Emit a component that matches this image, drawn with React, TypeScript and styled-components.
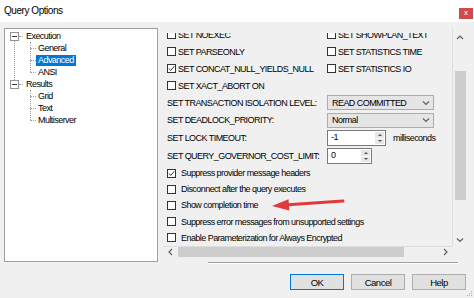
import React from "react";
import styled, { createGlobalStyle } from "styled-components";

const FONT = `"Liberation Sans", Arial, sans-serif`;

const GlobalStyle = createGlobalStyle`
  html, body {
    margin: 0;
    padding: 0;
    background: #f0f0f0;
  }
  body {
    font-family: ${FONT};
  }
`;

const Window = styled.div`
  position: relative;
  width: 474px;
  height: 298px;
  background: #f0f0f0;
  font-family: ${FONT};
  font-size: 9px;
  letter-spacing: -0.55px;
  color: #000;
  overflow: hidden;
  display: flex;
  flex-direction: column;
`;

const TitleBar = styled.div`
  height: 22px;
  flex-shrink: 0;
  background: #fff;
  display: flex;
  align-items: flex-start;
`;

const Title = styled.span`
  font-size: 10px;
  letter-spacing: -0.45px;
  line-height: 22px;
  padding-left: 4px;
`;

const CloseButton = styled.div`
  margin: 8px 1px 0 auto;
  width: 14px;
  height: 11px;
  background: #d24b4b;
  color: #fff;
  font-size: 8px;
  letter-spacing: 0;
  line-height: 10px;
  text-align: center;
`;

const Body = styled.div`
  flex: 1;
  display: flex;
  flex-direction: column;
  padding: 6px 7px 0 4px;
`;

const MainRow = styled.div`
  display: flex;
  gap: 5px;
  height: 235px;
`;

/* ---------- tree ---------- */

const TreePanel = styled.div`
  width: 154px;
  height: 234px;
  box-sizing: border-box;
  background: #fff;
  border: 1px solid #a0a0a0;
  padding-top: 1px;
`;

const TreeGroup = styled.div<{ $hasNext?: boolean }>`
  position: relative;
  ${(p) =>
    p.$hasNext &&
    `
    &::before {
      content: "";
      position: absolute;
      left: 9px;
      top: 11px;
      bottom: -2px;
      border-left: 1px dotted #a0a0a0;
    }
  `}
`;

const RootRow = styled.div`
  height: 12px;
  display: flex;
  align-items: center;
  padding-left: 5px;
`;

const Expander = styled.span`
  position: relative;
  width: 9px;
  height: 9px;
  box-sizing: border-box;
  border: 1px solid #919191;
  background: #fff;
  flex-shrink: 0;
  &::after {
    content: "";
    position: absolute;
    left: 1px;
    top: 3px;
    width: 5px;
    height: 1px;
    background: #333;
  }
`;

const Dash = styled.span<{ $w: number }>`
  width: ${(p) => p.$w}px;
  border-top: 1px dotted #a0a0a0;
  flex-shrink: 0;
`;

const ChildList = styled.div<{ $count: number }>`
  position: relative;
  &::before {
    content: "";
    position: absolute;
    left: 25px;
    top: 0;
    height: ${(p) => p.$count * 12 - 6}px;
    border-left: 1px dotted #a0a0a0;
  }
`;

const ChildRow = styled.div`
  height: 12px;
  display: flex;
  align-items: center;
  padding-left: 25px;
`;

const TreeLabel = styled.span<{ $selected?: boolean; $root?: boolean }>`
  padding: 0 2px;
  margin-left: ${(p) => (p.$root ? 1 : 0)}px;
  line-height: 11px;
  background: ${(p) => (p.$selected ? "#0078d7" : "transparent")};
  color: ${(p) => (p.$selected ? "#fff" : "#000")};
`;

/* ---------- right side ---------- */

const RightCol = styled.div`
  flex: 1;
  display: flex;
  flex-direction: column;
`;

const ScrollFrame = styled.div`
  height: 230px;
  display: grid;
  grid-template-columns: 1fr 15px;
  grid-template-rows: 1fr 12px;
`;

const Viewport = styled.div`
  margin-top: 5px;
  overflow: hidden;
  position: relative;
`;

const Content = styled.div`
  margin-top: -7px;
  padding-left: 4px;
  display: flex;
  flex-direction: column;
`;

const Row = styled.div<{ $h: number }>`
  height: ${(p) => p.$h}px;
  display: flex;
  align-items: center;
  white-space: nowrap;
`;

const Cell = styled.div`
  width: 160px;
  flex-shrink: 0;
  display: flex;
  align-items: center;
`;

const Box = styled.span<{ $gap: number }>`
  width: 9px;
  height: 9px;
  box-sizing: border-box;
  border: 1px solid #333;
  background: #fff;
  margin-right: ${(p) => p.$gap}px;
  flex-shrink: 0;
  display: inline-flex;
  align-items: center;
  justify-content: center;
`;

const Combo = styled.div`
  width: 107px;
  height: 15px;
  box-sizing: border-box;
  border: 1px solid #acacac;
  background: #e5e5e5;
  display: flex;
  align-items: center;
  justify-content: space-between;
  padding: 0 3px 0 4px;
`;

const Spin = styled.div<{ $w: number }>`
  width: ${(p) => p.$w}px;
  height: 16px;
  box-sizing: border-box;
  border: 1px solid #7a7a7a;
  background: #fff;
  display: flex;
`;

const SpinText = styled.span`
  flex: 1;
  padding-left: 3px;
  line-height: 13px;
`;

const SpinButtons = styled.div`
  width: 9px;
  display: flex;
  flex-direction: column;
  gap: 1px;
  padding: 1px 1px 1px 0;
`;

const SpinHalf = styled.div<{ $up?: boolean }>`
  flex: 1;
  background: #e6e6e6;
  display: flex;
  align-items: center;
  justify-content: center;
  &::after {
    content: "";
    border-left: 2px solid transparent;
    border-right: 2px solid transparent;
    ${(p) => (p.$up ? "border-bottom: 2px solid #555;" : "border-top: 2px solid #555;")}
  }
`;

const Unit = styled.span`
  margin-left: 7px;
`;

const VScroll = styled.div`
  grid-row: 1;
  grid-column: 2;
  border-left: 1px solid #dedede;
  background: #f0f0f0;
  display: flex;
  flex-direction: column;
  align-items: center;
`;

const ArrowCell = styled.div<{ $size: number }>`
  flex-shrink: 0;
  width: 100%;
  height: ${(p) => p.$size}px;
  display: flex;
  align-items: center;
  justify-content: center;
`;

const VThumb = styled.div`
  margin-top: 23px;
  width: 11px;
  height: 129px;
  background: #cdcdcd;
`;

const Spacer = styled.div`
  flex: 1;
`;

const HScroll = styled.div`
  border-top: 1px solid #dedede;
  background: #f0f0f0;
  display: flex;
  align-items: center;
`;

const HArrow = styled.div`
  width: 15px;
  height: 100%;
  flex-shrink: 0;
  display: flex;
  align-items: center;
  justify-content: center;
`;

const HThumb = styled.div`
  width: 226px;
  height: 10px;
  background: #cdcdcd;
`;

const Corner = styled.div`
  background: #f0f0f0;
`;

const Separator = styled.div`
  margin: 4px 9px 0 45px;
  border-top: 1px solid #a0a0a0;
  border-bottom: 1px solid #fff;
`;

const ButtonRow = styled.div`
  margin-top: 11px;
  display: flex;
  justify-content: flex-end;
  gap: 7px;
  padding-right: 1px;
`;

const Button = styled.button<{ $default?: boolean }>`
  width: 54px;
  height: 16px;
  padding: 0;
  font-family: ${FONT};
  font-size: 9.5px;
  letter-spacing: -0.5px;
  color: #000;
  background: #e1e1e1;
  border: 1px solid ${(p) => (p.$default ? "#0078d7" : "#adadad")};
`;

const Annotation = styled.svg`
  position: absolute;
  left: 268px;
  top: 194px;
`;

const Grip = styled.svg`
  position: absolute;
  right: 1px;
  bottom: 1px;
`;

type Dir = "up" | "down" | "left" | "right";

const CHEVRONS: Record<Dir, string> = {
  up: "M1 5 L4 2 L7 5",
  down: "M1 2.5 L4 5.5 L7 2.5",
  left: "M5 1 L2 4 L5 7",
  right: "M3 1 L6 4 L3 7",
};

function Chevron({ dir, color = "#606060" }: { dir: Dir; color?: string }) {
  return (
    <svg width="8" height="8" viewBox="0 0 8 8">
      <path d={CHEVRONS[dir]} fill="none" stroke={color} strokeWidth="1.2" />
    </svg>
  );
}

function Check({ label, checked, gap = 2 }: { label: string; checked?: boolean; gap?: number }) {
  return (
    <>
      <Box $gap={gap}>
        {checked && (
          <svg width="7" height="7" viewBox="0 0 7 7">
            <path d="M0.8 3.5 L2.8 5.4 L6.3 1.2" fill="none" stroke="#333" strokeWidth="1" />
          </svg>
        )}
      </Box>
      <span>{label}</span>
    </>
  );
}

const tree = [
  { label: "Execution", children: ["General", "Advanced", "ANSI"] },
  { label: "Results", children: ["Grid", "Text", "Multiserver"] },
];

const bottomChecks = [
  { label: "Suppress provider message headers", checked: true },
  { label: "Disconnect after the query executes" },
  { label: "Show completion time" },
  { label: "Suppress error messages from unsupported settings" },
  { label: "Enable Parameterization for Always Encrypted" },
];

export default function App() {
  return (
    <>
      <GlobalStyle />
      <Window>
        <TitleBar>
          <Title>Query Options</Title>
          <CloseButton>x</CloseButton>
        </TitleBar>
        <Body>
          <MainRow>
            <TreePanel>
              {tree.map((group, gi) => (
                <TreeGroup key={group.label} $hasNext={gi < tree.length - 1}>
                  <RootRow>
                    <Expander />
                    <Dash $w={4} />
                    <TreeLabel $root>{group.label}</TreeLabel>
                  </RootRow>
                  <ChildList $count={group.children.length}>
                    {group.children.map((c) => (
                      <ChildRow key={c}>
                        <Dash $w={6} />
                        <TreeLabel $selected={c === "Advanced"}>{c}</TreeLabel>
                      </ChildRow>
                    ))}
                  </ChildList>
                </TreeGroup>
              ))}
            </TreePanel>

            <RightCol>
              <ScrollFrame>
                <Viewport>
                  <Content>
                    <Row $h={17}>
                      <Cell><Check label="SET NOEXEC" /></Cell>
                      <Check label="SET SHOWPLAN_TEXT" />
                    </Row>
                    <Row $h={17}>
                      <Cell><Check label="SET PARSEONLY" /></Cell>
                      <Check label="SET STATISTICS TIME" />
                    </Row>
                    <Row $h={17}>
                      <Cell><Check label="SET CONCAT_NULL_YIELDS_NULL" checked /></Cell>
                      <Check label="SET STATISTICS IO" />
                    </Row>
                    <Row $h={17}>
                      <Cell><Check label="SET XACT_ABORT ON" /></Cell>
                    </Row>
                    <Row $h={17.5}>
                      <Cell>SET TRANSACTION ISOLATION LEVEL:</Cell>
                      <Combo>
                        <span>READ COMMITTED</span>
                        <Chevron dir="down" />
                      </Combo>
                    </Row>
                    <Row $h={17.5}>
                      <Cell>SET DEADLOCK_PRIORITY:</Cell>
                      <Combo>
                        <span>Normal</span>
                        <Chevron dir="down" />
                      </Combo>
                    </Row>
                    <Row $h={18}>
                      <Cell>SET LOCK TIMEOUT:</Cell>
                      <Spin $w={59}>
                        <SpinText>-1</SpinText>
                        <SpinButtons>
                          <SpinHalf $up />
                          <SpinHalf />
                        </SpinButtons>
                      </Spin>
                      <Unit>milliseconds</Unit>
                    </Row>
                    <Row $h={18}>
                      <Cell>SET QUERY_GOVERNOR_COST_LIMIT:</Cell>
                      <Spin $w={45}>
                        <SpinText>0</SpinText>
                        <SpinButtons>
                          <SpinHalf $up />
                          <SpinHalf />
                        </SpinButtons>
                      </Spin>
                    </Row>
                    {bottomChecks.map((c) => (
                      <Row $h={16.2} key={c.label}>
                        <Check label={c.label} checked={c.checked} gap={5} />
                      </Row>
                    ))}
                  </Content>
                </Viewport>

                <VScroll>
                  <ArrowCell $size={20}>
                    <Chevron dir="up" />
                  </ArrowCell>
                  <VThumb />
                  <Spacer />
                  <ArrowCell $size={12}>
                    <Chevron dir="down" />
                  </ArrowCell>
                </VScroll>

                <HScroll>
                  <HArrow>
                    <Chevron dir="left" />
                  </HArrow>
                  <HThumb />
                  <Spacer />
                  <HArrow>
                    <Chevron dir="right" />
                  </HArrow>
                </HScroll>
                <Corner />
              </ScrollFrame>
              <Separator />
            </RightCol>
          </MainRow>

          <ButtonRow>
            <Button $default>OK</Button>
            <Button>Cancel</Button>
            <Button>Help</Button>
          </ButtonRow>
        </Body>

        <Annotation width="80" height="20" viewBox="0 0 80 20">
          <line x1="20" y1="10.8" x2="75" y2="7" stroke="#e2393d" strokeWidth="3" strokeLinecap="round" />
          <polygon points="4,12 21.4,16.5 20.5,5.2" fill="#e2393d" />
        </Annotation>

        <Grip width="6" height="6" viewBox="0 0 6 6">
          <rect x="4" y="0" width="1" height="1" fill="#b0b0b0" />
          <rect x="2" y="2" width="1" height="1" fill="#b0b0b0" />
          <rect x="4" y="2" width="1" height="1" fill="#b0b0b0" />
          <rect x="0" y="4" width="1" height="1" fill="#b0b0b0" />
          <rect x="2" y="4" width="1" height="1" fill="#b0b0b0" />
          <rect x="4" y="4" width="1" height="1" fill="#b0b0b0" />
        </Grip>
      </Window>
    </>
  );
}
